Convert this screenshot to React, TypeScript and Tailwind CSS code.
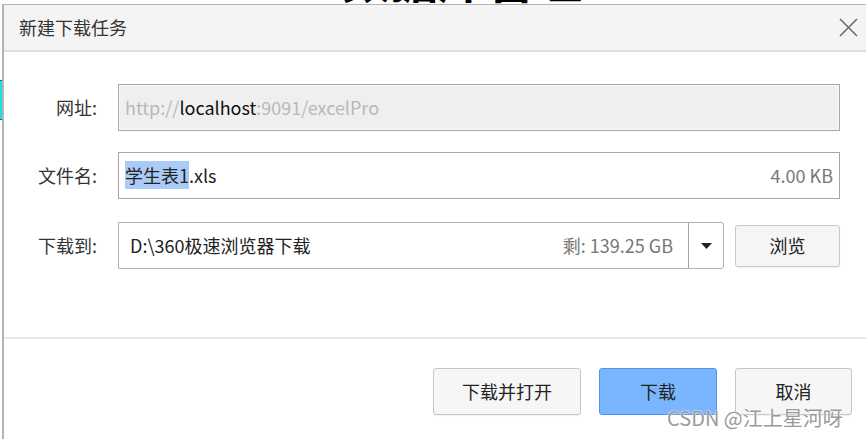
import React from "react";

const font = "font-['Microsoft_YaHei','Noto_Sans_CJK_SC',sans-serif]";

function CloseIcon() {
  return (
    <svg width="19" height="19" viewBox="0 0 19 19" fill="none">
      <path d="M1 1L18 18M18 1L1 18" stroke="#6b6b6b" strokeWidth="1.6" />
    </svg>
  );
}

export default function App() {
  return (
    <div className={`relative h-[439px] w-[866px] overflow-hidden bg-white ${font}`}>
      {/* page behind the dialog */}
      <div className="absolute left-[342px] top-[-47px] text-[48px] font-bold leading-none text-black">
        数据库管理
      </div>
      <div className="absolute left-0 top-[80px] h-[40px] w-[3px] border-y border-[#555] bg-[#18e0dc]" />

      {/* dialog */}
      <div className="absolute bottom-0 left-[2px] right-[-4px] top-[4px] z-10 flex flex-col border-l-2 border-t border-[#b4b4b4] bg-white">
        <div className="flex h-[47px] items-center justify-between border-b-2 border-[#dedede] bg-[#f4f4f4] pl-[15px] pr-[12px]">
          <span className="text-[18px] text-[#333]">新建下载任务</span>
          <CloseIcon />
        </div>

        <div className="flex flex-col pt-[32px]">
          <div className="flex items-center">
            <div className="w-[94px] pr-[1px] text-right text-[18px] text-[#333]">网址:</div>
            <div className="ml-[20px] flex h-[47px] w-[722px] items-center border border-[#a6a6a6] bg-[#efefef] pl-[6px] text-[18px] shadow-[inset_0_0_0_1px_#f8f8f8]">
              <span className="text-[#b9b9b9]">http://</span>
              <span className="text-[#111]">localhost</span>
              <span className="text-[#b9b9b9]">:9091/excelPro</span>
            </div>
          </div>

          <div className="mt-[21px] flex items-center">
            <div className="w-[94px] pr-[1px] text-right text-[18px] text-[#333]">文件名:</div>
            <div className="ml-[20px] flex h-[47px] w-[722px] items-center justify-between border border-[#a6a6a6] bg-white pl-[6px] pr-[6px] text-[18px]">
              <span className="text-[#222]">
                <span className="bg-[#abcbf7] py-[1px]">学生表1</span>.xls
              </span>
              <span className="text-[#777]">4.00 KB</span>
            </div>
          </div>

          <div className="mt-[23px] flex items-center">
            <div className="w-[94px] pr-[1px] text-right text-[18px] text-[#333]">下载到:</div>
            <div className="ml-[20px] flex h-[47px] w-[606px] items-stretch rounded-r-[3px] border border-[#b0b0b0] bg-white text-[18px]">
              <div className="flex flex-1 items-center justify-between border-r border-[#a6a6a6] pl-[11px] pr-[15px]">
                <span className="text-[#222]">D:\360极速浏览器下载</span>
                <span className="text-[#777]">剩: 139.25 GB</span>
              </div>
              <div className="flex w-[34px] items-center justify-center">
                <svg width="11" height="6" viewBox="0 0 11 6">
                  <path d="M0 0H11L5.5 6Z" fill="#222" />
                </svg>
              </div>
            </div>
            <button className="ml-[11px] h-[42px] w-[105px] rounded-[3px] border border-[#c8c8c8] bg-[#f5f5f5] text-[18px] text-[#222] shadow-[0_1px_1px_rgba(0,0,0,0.06)]">
              浏览
            </button>
          </div>
        </div>

        <div className="mt-[68px] border-t-2 border-[#e8e8e8]" />

        <div className="flex gap-[18px] pl-[429px] pt-[29px]">
          <button className="h-[47px] w-[148px] rounded-[3px] border border-[#c6c6c6] bg-[#f6f6f6] text-[18px] text-[#222] shadow-[0_1px_1px_rgba(0,0,0,0.06)]">
            下载并打开
          </button>
          <button className="h-[47px] w-[118px] rounded-[3px] border border-[#4b95ee] bg-[#7ab6fd] text-[18px] text-[#222]">
            下载
          </button>
          <button className="h-[47px] w-[117px] rounded-[3px] border border-[#c6c6c6] bg-[#f6f6f6] text-[18px] text-[#222] shadow-[0_1px_1px_rgba(0,0,0,0.06)]">
            取消
          </button>
        </div>
      </div>

      {/* watermark */}
      <div className="absolute left-[667px] top-[404px] z-20 text-[20px] leading-[28px] text-[#9a9a9a] [text-shadow:0_0_1px_#fff,0_0_2px_#fff]">
        CSDN @江上星河呀
      </div>
    </div>
  );
}
